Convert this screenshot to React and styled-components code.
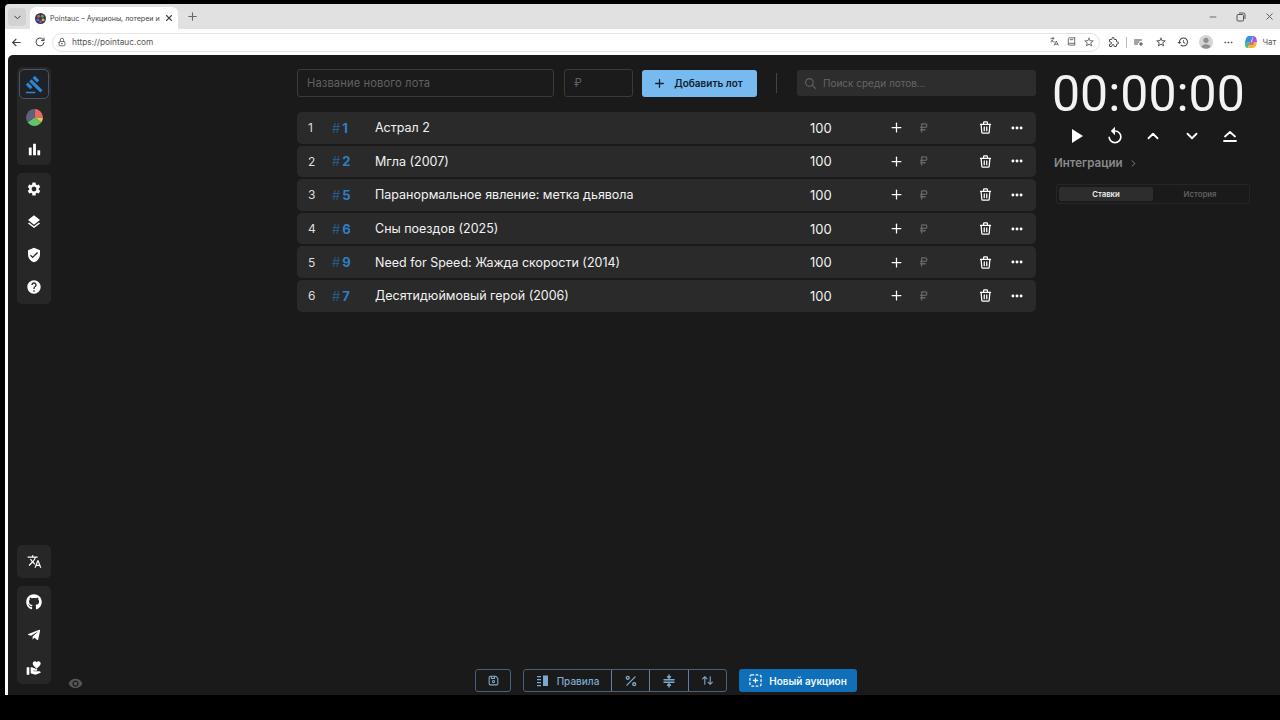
import React from 'react';
import styled, { createGlobalStyle } from 'styled-components';
import {
  MdGavel, MdBarChart, MdSettings, MdLayers, MdVerifiedUser, MdHelp, MdTranslate,
  MdVolunteerActivism, MdVisibility, MdPlayArrow, MdReplay, MdOutlineStarBorder, MdOutlineHistory,
} from 'react-icons/md';
import { FaGithub, FaTelegramPlane } from 'react-icons/fa';
import { LuPercent } from 'react-icons/lu';
import {
  TbPlus, TbSearch, TbCurrencyRubel, TbTrash, TbDots, TbChevronUp, TbChevronDown, TbChevronRight,
  TbDeviceFloppy, TbArrowsSort, TbX, TbArrowLeft, TbReload, TbLock, TbLanguage,
  TbBook2, TbPuzzle, TbMinus, TbPlaylistAdd,
} from 'react-icons/tb';

const GlobalStyle = createGlobalStyle`
  html, body {
    margin: 0;
    background: #000;
    font-family: Inter, "Liberation Sans", sans-serif;
    overflow: hidden;
  }
`;

const Screen = styled.div`
  width: 1280px;
  height: 720px;
  padding: 4px 0 25px 5px;
  box-sizing: border-box;
  background: #000;
  display: flex;
  flex-direction: column;
`;

const TabStrip = styled.div`
  height: 25px;
  background: #e1e1e1;
  display: flex;
  align-items: flex-end;
  flex-shrink: 0;
  border-radius: 4px 0 0 0;
`;

const TabMenu = styled.div`
  width: 18px;
  height: 18px;
  margin: 0 4px 3px 3px;
  border-radius: 4px;
  background: #d2d2d2;
  display: flex;
  align-items: center;
  justify-content: center;
  color: #333;
`;

const Tab = styled.div`
  width: 148px;
  height: 22px;
  background: #fff;
  border-radius: 6px 6px 0 0;
  display: flex;
  align-items: center;
  padding: 0 4px 0 5px;
  box-sizing: border-box;
  gap: 4px;
  font-size: 7.1px;
  color: #444;
  white-space: nowrap;
`;

const TabTitle = styled.span`
  flex: 1;
`;

const NewTab = styled.div`
  margin: 0 0 4px 8px;
  color: #666;
  display: flex;
  height: 18px;
  align-items: center;
`;

const WindowButtons = styled.div`
  margin-left: auto;
  height: 100%;
  display: flex;
  align-items: center;
  gap: 18px;
  padding-right: 5px;
  color: #555;
`;

const AddressRow = styled.div`
  height: 26px;
  background: #fff;
  display: flex;
  align-items: center;
  flex-shrink: 0;
  color: #444;
`;

const NavButton = styled.div`
  width: 23px;
  display: flex;
  justify-content: center;
`;

const Omnibox = styled.div`
  width: 1048px;
  height: 19px;
  margin-left: 1px;
  border: 1px solid #e4e4e4;
  border-radius: 10px;
  box-sizing: border-box;
  display: flex;
  align-items: center;
  gap: 5px;
  padding: 0 4px;
  font-size: 8.3px;
  color: #555;
`;

const OmniIcons = styled.div`
  margin-left: auto;
  display: flex;
  gap: 6px;
  color: #666;
`;

const ToolIcons = styled.div`
  display: flex;
  align-items: center;
  gap: 10.2px;
  margin-left: 8px;
  color: #444;
`;

const ToolDivider = styled.div`
  width: 1px;
  height: 11px;
  margin: 0 -4.5px;
  background: #bbb;
`;

const ChatLabel = styled.span`
  font-size: 8px;
  color: #555;
  margin-left: -6px;
`;

const WhiteEdge = styled.div`
  flex: 1;
  min-height: 0;
  background: #fff;
  padding-left: 3px;
  display: flex;
`;

const Page = styled.div`
  position: relative;
  flex: 1;
  background: #1a1a1a;
  border-radius: 5px 0 0 0;
  display: flex;
  color: #fff;
`;

const Sidebar = styled.aside`
  width: 34px;
  margin-left: 9px;
  padding: 12px 0 11px;
  box-sizing: border-box;
  display: flex;
  flex-direction: column;
  gap: 8px;
  flex-shrink: 0;
`;

const SideSpacer = styled.div`
  flex: 1;
`;

const SidePanel = styled.nav`
  background: #272727;
  border-radius: 5px;
  padding-top: ${p => p.$lead ? 2 : 0}px;
  display: flex;
  flex-direction: column;
  align-items: center;
`;

const SideButton = styled.div`
  width: 30px;
  height: ${p => p.$short ? 32 : 32.7}px;
  box-sizing: border-box;
  display: flex;
  align-items: center;
  justify-content: center;
  color: #fff;
  border-radius: 5px;
  ${p => p.$active && `
    height: 30px;
    margin-bottom: 2px;
    color: #2f86cf;
    background: #1e2126;
    border: 1px solid #4a5568;
  `}
`;

const EyeMark = styled.div`
  position: absolute;
  left: 60px;
  bottom: 4px;
  color: #565656;
  display: flex;
`;

const Main = styled.main`
  width: 739px;
  margin-left: 246px;
  display: flex;
  flex-direction: column;
  flex-shrink: 0;
`;

const AddBar = styled.div`
  display: flex;
  align-items: center;
  height: 28px;
  margin-top: 14px;
`;

const TextField = styled.div`
  width: ${p => p.$width}px;
  height: 28px;
  margin-right: ${p => p.$gap}px;
  border: 1px solid #3a3a3a;
  border-radius: 3px;
  background: #1b1b1b;
  box-sizing: border-box;
  padding-left: 9px;
  display: flex;
  align-items: center;
  font-size: 11.2px;
  color: #616161;
  letter-spacing: 0.1px;
`;

const AddButton = styled.button`
  width: 115px;
  height: 27px;
  border: none;
  border-radius: 3px;
  background: #76baf0;
  color: #10202f;
  font: 600 10px Inter, sans-serif;
  display: flex;
  align-items: center;
  justify-content: center;
  gap: 8px;
  padding: 0 3px 0 0;
`;

const Divider = styled.div`
  width: 1px;
  height: 20px;
  margin: 0 20px 0 19px;
  background: #444;
`;

const SearchField = styled.div`
  flex: 1;
  height: 26px;
  background: #2d2d2d;
  border-radius: 3px;
  display: flex;
  align-items: center;
  gap: 6px;
  padding-left: 7px;
  font-size: 10px;
  color: #666;
`;

const LotList = styled.div`
  display: flex;
  flex-direction: column;
  gap: 2px;
  margin-top: 15px;
`;

const LotRow = styled.div`
  height: 31.6px;
  background: #2a2a2a;
  border-radius: 5px;
  display: grid;
  grid-template-columns: 35px 43px 435px 78.5px 28.5px 61px 32px 1fr;
  align-items: center;
  font-size: 12.5px;
  color: #f2f2f2;
`;

const RowIndex = styled.span`
  padding-left: 11px;
  font-size: 12px;
  color: #ddd;
`;

const LotId = styled.span`
  font-weight: 700;
  font-size: 13px;
  color: #2f7fc4;
  & > i {
    font-style: normal;
    font-weight: 400;
    color: #255a88;
    margin-right: 2px;
  }
`;

const LotName = styled.span`
  white-space: nowrap;
`;

const LotCost = styled.span`
  font-size: 13px;
`;

const RowIcon = styled.span`
  display: flex;
  color: ${p => p.$muted ? '#666' : '#fff'};
`;

const BottomBar = styled.div`
  margin-top: auto;
  margin-bottom: 3px;
  padding-right: 1px;
  display: flex;
  justify-content: center;
  align-items: center;
`;

const OutlineButton = styled.div`
  width: 36px;
  height: 23px;
  border: 1px solid #47617a;
  border-radius: 3px;
  box-sizing: border-box;
  color: #7ea9cf;
  display: flex;
  align-items: center;
  justify-content: center;
  margin-right: 12px;
`;

const ButtonGroup = styled.div`
  display: flex;
  height: 23px;
  border: 1px solid #47617a;
  border-radius: 3px;
  box-sizing: border-box;
  margin-right: 12px;
`;

const GroupItem = styled.div`
  width: ${p => p.$width}px;
  box-sizing: border-box;
  display: flex;
  align-items: center;
  justify-content: center;
  gap: 8px;
  color: #7ea9cf;
  font-size: 10px;
  font-weight: 500;
  & + & {
    border-left: 1px solid #5d82a6;
  }
`;

const PrimaryButton = styled.div`
  width: 118px;
  height: 23px;
  background: #0f6fb8;
  border-radius: 3px;
  color: #f2f7fb;
  font-size: 10px;
  font-weight: 600;
  display: flex;
  align-items: center;
  justify-content: center;
  gap: 7px;
`;

const RightColumn = styled.section`
  width: 196px;
  margin-left: 18px;
  display: flex;
  flex-direction: column;
  flex-shrink: 0;
`;

const Timer = styled.div`
  font-family: Roboto, sans-serif;
  font-size: 50px;
  line-height: 44px;
  margin: 17px 0 0 -2px;
  color: #f3f3f3;
  white-space: nowrap;
`;

const TimerControls = styled.div`
  margin-top: 7px;
  height: 26px;
  padding-left: 3px;
  display: grid;
  grid-template-columns: repeat(5, 38.5px);
  justify-items: center;
  align-items: center;
  color: #fff;
`;

const IntegrationLink = styled.div`
  margin-top: 7px;
  display: flex;
  align-items: center;
  gap: 5px;
  font-size: 11.5px;
  font-weight: 600;
  color: #8a8a8a;
`;

const BidTabs = styled.div`
  margin: 14px 0 0 2px;
  width: 194px;
  height: 20px;
  border: 1px solid #262626;
  border-radius: 3px;
  box-sizing: border-box;
  padding: 2px;
  display: flex;
  font-size: 7.8px;
  font-weight: 600;
`;

const BidTab = styled.div`
  flex: ${p => p.$active ? '0 0 94px' : 1};
  background: ${p => p.$active ? '#2d2d2d' : 'transparent'};
  color: ${p => p.$active ? '#eee' : '#5f5f5f'};
  border-radius: 2px;
  display: flex;
  align-items: center;
  justify-content: center;
`;

const PieIcon = () => (
  <svg width="19" height="19" viewBox="0 0 18 18">
    <path d="M9 9V1a8 8 0 0 1 8 8z" fill="#e86a64" />
    <path d="M9 9h8a8 8 0 0 1-1.500 4.600z" fill="#e9c84f" />
    <path d="M9 9l6.500 4.600a8 8 0 0 1-13 0z" fill="#62c26e" />
    <path d="M9 9l-6.500 4.600A8 8 0 0 1 9 1z" fill="#59627e" />
  </svg>
);

const Favicon = () => (
  <svg width="11" height="11" viewBox="0 0 12 12">
    <circle cx="6" cy="6" r="6" fill="#3f3550" />
    <circle cx="4" cy="3.500" r="1.600" fill="#d8554b" />
    <circle cx="8" cy="3.500" r="1.600" fill="#4fa763" />
    <circle cx="3.200" cy="7.500" r="1.600" fill="#3c7fc7" />
    <circle cx="8.800" cy="7.500" r="1.600" fill="#d9b23c" />
    <circle cx="6" cy="9.500" r="1.400" fill="#9a55b8" />
  </svg>
);

const CopilotIcon = () => (
  <svg width="14" height="14" viewBox="0 0 14 14">
    <path d="M2 3.500C2.600 1.500 4 1 5.500 1H9L7 7H1z" fill="#3d8ce8" />
    <path d="M9 1c2 0 3 1 3.400 2.500L13 7H8z" fill="#9d5fe0" />
    <path d="M1 7h5l-2 6c-2 0-3-1-3-3z" fill="#45c08a" />
    <path d="M6 7h7l-1 3.500C11.500 12.300 10 13 8.500 13H4z" fill="#efb63e" />
    <path d="M6 7h4l-1 3H5z" fill="#e8607a" />
  </svg>
);

const ProfileIcon = () => (
  <svg width="14" height="14" viewBox="0 0 14 14">
    <circle cx="7" cy="7" r="7" fill="#d4d4d4" />
    <circle cx="7" cy="5.300" r="2.600" fill="#8f8f8f" />
    <path d="M2.400 12a4.800 3.800 0 0 1 9.200 0A7 7 0 0 1 2.400 12z" fill="#8f8f8f" />
  </svg>
);

const RestoreIcon = () => (
  <svg width="10" height="10" viewBox="0 0 10 10" fill="none" stroke="currentColor" strokeWidth="1">
    <rect x="1" y="2.500" width="6.500" height="6.500" rx="1" />
    <path d="M3 1h4.500A1.500 1.500 0 0 1 9 2.500V7" />
  </svg>
);

const EjectIcon = () => (
  <svg width="18" height="18" viewBox="0 0 18 18" fill="none" stroke="currentColor" strokeWidth="1.800" strokeLinecap="round" strokeLinejoin="round">
    <path d="M4 9.500l5-4.500 5 4.500" />
    <path d="M3 14h12" />
  </svg>
);

const RulesIcon = () => (
  <svg width="13" height="13" viewBox="0 0 13 13" fill="currentColor">
    <path d="M1 2h4v1.200H1zM1 5h4v1.200H1zM1 8h4v1.200H1zM1 11h4v1.200H1z" />
    <path d="M7 1.500h5v10.500H7z" />
  </svg>
);

const SplitIcon = () => (
  <svg width="14" height="14" viewBox="0 0 14 14" fill="none" stroke="currentColor" strokeWidth="1.400" strokeLinecap="round" strokeLinejoin="round">
    <path d="M2 5.800h10M2 8.200h10" />
    <path d="M7 1v3M5.500 2.800L7 4.200l1.500-1.400M7 13v-3M5.500 11.200L7 9.800l1.500 1.400" />
  </svg>
);

const DashedPlusIcon = () => (
  <svg width="13" height="13" viewBox="0 0 14 14" fill="none" stroke="currentColor" strokeWidth="1.400" strokeLinecap="round">
    <rect x="1" y="1" width="12" height="12" rx="2" strokeDasharray="2 2.600" />
    <path d="M7 4.700v4.600M4.700 7h4.600" />
  </svg>
);

const lots = [
  { id: 1, name: 'Астрал 2' },
  { id: 2, name: 'Мгла (2007)' },
  { id: 5, name: 'Паранормальное явление: метка дьявола' },
  { id: 6, name: 'Сны поездов (2025)' },
  { id: 9, name: 'Need for Speed: Жажда скорости (2014)' },
  { id: 7, name: 'Десятидюймовый герой (2006)' },
];

export default function App() {
  return (
    <Screen>
      <GlobalStyle />
      <TabStrip>
        <TabMenu><TbChevronDown size={11} /></TabMenu>
        <Tab>
          <Favicon />
          <TabTitle>Pointauc – Аукционы, лотереи и</TabTitle>
          <TbX size={10} strokeWidth={2.6} />
        </Tab>
        <NewTab><TbPlus size={13} /></NewTab>
        <WindowButtons>
          <TbMinus size={10} />
          <RestoreIcon />
          <TbX size={11} />
        </WindowButtons>
      </TabStrip>
      <AddressRow>
        <NavButton><TbArrowLeft size={13} /></NavButton>
        <NavButton><TbReload size={12} /></NavButton>
        <Omnibox>
          <TbLock size={10} />
          https://pointauc.com
          <OmniIcons>
            <TbLanguage size={11} />
            <TbBook2 size={11} />
            <MdOutlineStarBorder size={12} />
          </OmniIcons>
        </Omnibox>
        <ToolIcons>
          <TbPuzzle size={12} />
          <ToolDivider />
          <TbPlaylistAdd size={12} />
          <MdOutlineStarBorder size={12} />
          <MdOutlineHistory size={12} />
          <ProfileIcon />
          <TbDots size={11} />
          <CopilotIcon />
          <ChatLabel>Чат</ChatLabel>
        </ToolIcons>
      </AddressRow>
      <WhiteEdge>
        <Page>
          <Sidebar>
            <SidePanel $lead>
              <SideButton $active><MdGavel size={19} /></SideButton>
              <SideButton $short><PieIcon /></SideButton>
              <SideButton $short><MdBarChart size={17} /></SideButton>
            </SidePanel>
            <SidePanel>
              <SideButton><MdSettings size={16} /></SideButton>
              <SideButton><MdLayers size={16} /></SideButton>
              <SideButton><MdVerifiedUser size={16} /></SideButton>
              <SideButton><MdHelp size={16} /></SideButton>
            </SidePanel>
            <SideSpacer />
            <SidePanel>
              <SideButton><MdTranslate size={15} /></SideButton>
            </SidePanel>
            <SidePanel>
              <SideButton><FaGithub size={16} /></SideButton>
              <SideButton><FaTelegramPlane size={14} /></SideButton>
              <SideButton><MdVolunteerActivism size={16} /></SideButton>
            </SidePanel>
          </Sidebar>
          <EyeMark><MdVisibility size={15} /></EyeMark>
          <Main>
            <AddBar>
              <TextField $width={257} $gap={10}>Название нового лота</TextField>
              <TextField $width={69} $gap={9}>₽</TextField>
              <AddButton><TbPlus size={13} strokeWidth={2.4} />Добавить лот</AddButton>
              <Divider />
              <SearchField><TbSearch size={13} />Поиск среди лотов...</SearchField>
            </AddBar>
            <LotList>
              {lots.map((lot, i) => (
                <LotRow key={lot.id}>
                  <RowIndex>{i + 1}</RowIndex>
                  <LotId><i>#</i>{lot.id}</LotId>
                  <LotName>{lot.name}</LotName>
                  <LotCost>100</LotCost>
                  <RowIcon><TbPlus size={15} strokeWidth={2} /></RowIcon>
                  <RowIcon $muted><TbCurrencyRubel size={14} strokeWidth={2.2} /></RowIcon>
                  <RowIcon><TbTrash size={15} strokeWidth={2} /></RowIcon>
                  <RowIcon><TbDots size={14} strokeWidth={3} /></RowIcon>
                </LotRow>
              ))}
            </LotList>
            <BottomBar>
              <OutlineButton><TbDeviceFloppy size={13} /></OutlineButton>
              <ButtonGroup>
                <GroupItem $width={87}><RulesIcon />Правила</GroupItem>
                <GroupItem $width={38}><LuPercent size={14} strokeWidth={2.2} /></GroupItem>
                <GroupItem $width={39}><SplitIcon /></GroupItem>
                <GroupItem $width={38}><TbArrowsSort size={13} /></GroupItem>
              </ButtonGroup>
              <PrimaryButton><DashedPlusIcon />Новый аукцион</PrimaryButton>
            </BottomBar>
          </Main>
          <RightColumn>
            <Timer>00:00:00</Timer>
            <TimerControls>
              <MdPlayArrow size={24} />
              <MdReplay size={20} />
              <TbChevronUp size={18} strokeWidth={2.4} />
              <TbChevronDown size={18} strokeWidth={2.4} />
              <EjectIcon />
            </TimerControls>
            <IntegrationLink>Интеграции <TbChevronRight size={11} /></IntegrationLink>
            <BidTabs>
              <BidTab $active>Ставки</BidTab>
              <BidTab>История</BidTab>
            </BidTabs>
          </RightColumn>
        </Page>
      </WhiteEdge>
    </Screen>
  );
}
